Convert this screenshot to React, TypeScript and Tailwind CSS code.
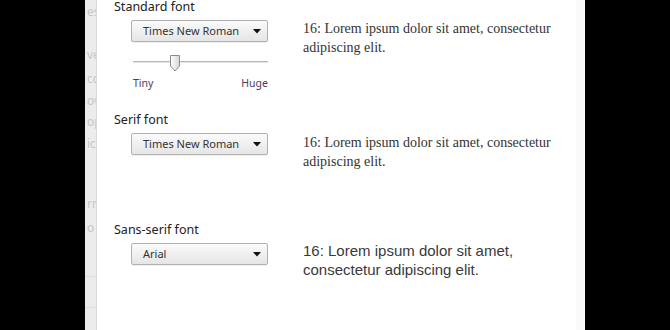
import React from 'react';

const labelFont = { fontFamily: '"Noto Sans", "Open Sans", sans-serif' };

const FontSelect: React.FC<{ value: string }> = ({ value }) => (
  <div
    className="w-[137px] h-[22px] flex items-center justify-between pl-[11px] pr-[6px] border border-[#b1b1b1] rounded-[2px] bg-gradient-to-b from-[#fbfbfb] to-[#e5e5e5] shadow-[0_1px_0_rgba(0,0,0,0.06)] text-[11px] text-[#333]"
    style={labelFont}
  >
    <span className="leading-[20px]">{value}</span>
    <svg width="8" height="5" viewBox="0 0 8 5">
      <path d="M0 0 H8 L4 4.5 Z" fill="#111" />
    </svg>
  </div>
);

const SizeSlider: React.FC = () => (
  <div>
    <div className="relative mt-[12px] h-[19px]">
      <div className="absolute left-[2px] right-0 top-[7px] h-[2px] bg-[#b9b9b9] border-b border-[#e2e2e2]" />
      <svg className="absolute left-[38px] top-0" width="12" height="19" viewBox="0 0 12 19">
        <defs>
          <linearGradient id="thumb" x1="0" y1="0" x2="1" y2="0">
            <stop offset="0" stopColor="#ffffff" />
            <stop offset="1" stopColor="#d6d6d6" />
          </linearGradient>
        </defs>
        <path d="M1.5 1.5 H10.5 V12 L6 17 L1.5 12 Z" fill="url(#thumb)" stroke="#8c8c8c" strokeWidth="1" />
      </svg>
    </div>
    <div
      className="mt-[3px] flex justify-between pl-[2px] text-[10.5px] leading-[14px] text-[#4a3d5e]"
      style={labelFont}
    >
      <span>Tiny</span>
      <span>Huge</span>
    </div>
  </div>
);

const Label: React.FC<{ text: string; className?: string }> = ({ text, className }) => (
  <div className={`h-[22px] text-[12.5px] leading-[18px] text-[#222] ${className ?? ''}`} style={labelFont}>
    {text}
  </div>
);

const serif = { fontFamily: '"Liberation Serif", "Times New Roman", serif' };
const sans = { fontFamily: '"Liberation Sans", Arial, sans-serif' };

// bits of the settings page showing past the dialog's left edge
const ghost = [
  { t: 'es', m: 'mt-[5px]' },
  { t: 've', m: 'mt-[29px]' },
  { t: 'cc', m: 'mt-[10px]' },
  { t: 'ov', m: 'mt-[8px]' },
  { t: 'op', m: 'mt-[7px]' },
  { t: 'ice', m: 'mt-[8px]' },
  { t: 'rm', m: 'mt-[46px]' },
  { t: 'o', m: 'mt-[10px]' },
];

export default function App() {
  return (
    <div className="w-[670px] h-[330px] bg-black flex overflow-hidden">
      <div className="w-[85px] shrink-0" />

      <div className="w-[12px] shrink-0 bg-[#ececec] border-r border-[#dadada] overflow-hidden flex flex-col" style={labelFont}>
        {ghost.map((g, i) => (
          <div key={i} className={`${g.m} h-[14px] pl-[2px] text-[12px] leading-[14px] text-[#c6c6c6] whitespace-nowrap`}>
            {g.t}
          </div>
        ))}
        <div className="mt-[41px] h-px bg-[#dedede]" />
        <div className="mt-[30px] h-px bg-[#dedede]" />
      </div>

      {/* dialog */}
      <div className="w-[479px] shrink-0 bg-white pl-[17px]">
        <div className="-mt-[2px]">
          <Label text="Standard font" />
          <div className="flex items-start">
            <div className="ml-[17px] w-[137px]">
              <FontSelect value="Times New Roman" />
              <SizeSlider />
            </div>
            <p className="ml-[35px] -mt-[1.5px] w-[260px] text-[14px] leading-[19px] text-[#333]" style={serif}>
              16: Lorem ipsum dolor sit amet, consectetur adipiscing elit.
            </p>
          </div>

          <Label text="Serif font" className="mt-[21px]" />
          <div className="flex items-start h-[22px]">
            <div className="ml-[17px] w-[137px]">
              <FontSelect value="Times New Roman" />
            </div>
            <p className="ml-[35px] -mt-[0.5px] w-[260px] text-[14px] leading-[19px] text-[#333]" style={serif}>
              16: Lorem ipsum dolor sit amet, consectetur adipiscing elit.
            </p>
          </div>

          <Label text="Sans-serif font" className="mt-[66px]" />
          <div className="flex items-start h-[22px]">
            <div className="ml-[17px] w-[137px]">
              <FontSelect value="Arial" />
            </div>
            <p className="ml-[35px] -mt-[2.5px] w-[260px] text-[15px] leading-[19px] text-[#3a3a3a]" style={sans}>
              16: Lorem ipsum dolor sit amet, consectetur adipiscing elit.
            </p>
          </div>
        </div>
      </div>

      <div className="w-[9px] shrink-0 bg-[#fafafa]" />
    </div>
  );
}
